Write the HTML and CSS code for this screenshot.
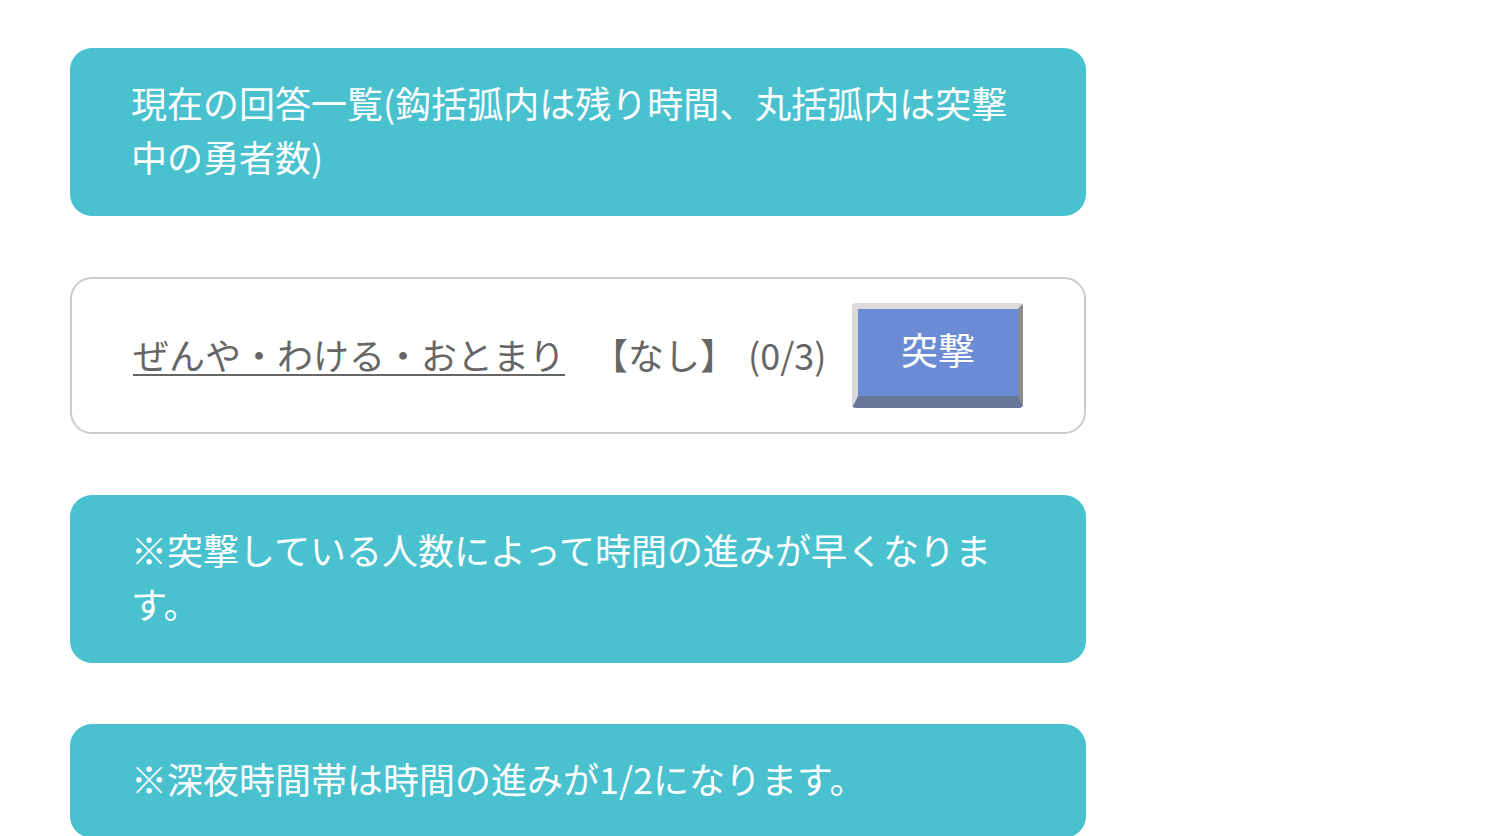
FILE: index.html
```html
<!DOCTYPE html>
<html lang="ja">
<head>
<meta charset="utf-8">
<title>回答一覧</title>
<link rel="stylesheet" href="styles.css">
</head>
<body>
<div class="page">
  <div class="note">現在の回答一覧(鈎括弧内は残り時間、丸括弧内は突撃中の勇者数)</div>
  <div class="answer">
    <a class="answer-name" href="#">ぜんや・わける・おとまり</a>
    <span class="answer-time">【なし】</span>
    <span class="answer-count">(0/3)</span>
    <button class="attack" type="button">突撃</button>
  </div>
  <div class="note">※突撃している人数によって時間の進みが早くなります。</div>
  <div class="note">※深夜時間帯は時間の進みが1/2になります。</div>
</div>
</body>
</html>
```

FILE: styles.css
```css
html, body {
  margin: 0;
  padding: 0;
  background: #ffffff;
}
body {
  font-family: "Noto Sans CJK JP", "Noto Sans", sans-serif;
  font-size: 36px;
  line-height: 1.5;
  overflow: hidden;
}
.page {
  width: 1016px;
  padding: 48px 0 0 70px;
  display: flex;
  flex-direction: column;
  gap: 61px;
}
.note {
  background: #49c1cf;
  color: #ffffff;
  border-radius: 22px;
  padding: 27px 61px 33px;
  line-height: 54px;
}
.answer {
  border: 2px solid #cccccc;
  border-radius: 22px;
  padding: 24px 61px;
  display: flex;
  align-items: center;
  color: #666666;
  line-height: 54px;
}
.answer-name,
.answer-time,
.answer-count {
  padding-bottom: 4px;
}
.answer-name {
  color: #666666;
  text-decoration: underline;
  text-underline-offset: 4px;
  text-decoration-thickness: 2px;
}
.answer-time {
  margin-left: 27px;
}
.answer-count {
  margin-left: 12px;
}
.attack {
  margin-left: auto;
  font-family: inherit;
  font-size: 37px;
  line-height: 54px;
  height: 105px;
  box-sizing: border-box;
  color: #ffffff;
  background: #6b8cd5;
  border-style: solid;
  border-width: 6px 5px 12px 6px;
  border-color: #dcdcdc #8c8c8c #667799 #d9d9d9;
  border-radius: 4px;
  padding: 13px 43px 20px;
  cursor: pointer;
}
```
